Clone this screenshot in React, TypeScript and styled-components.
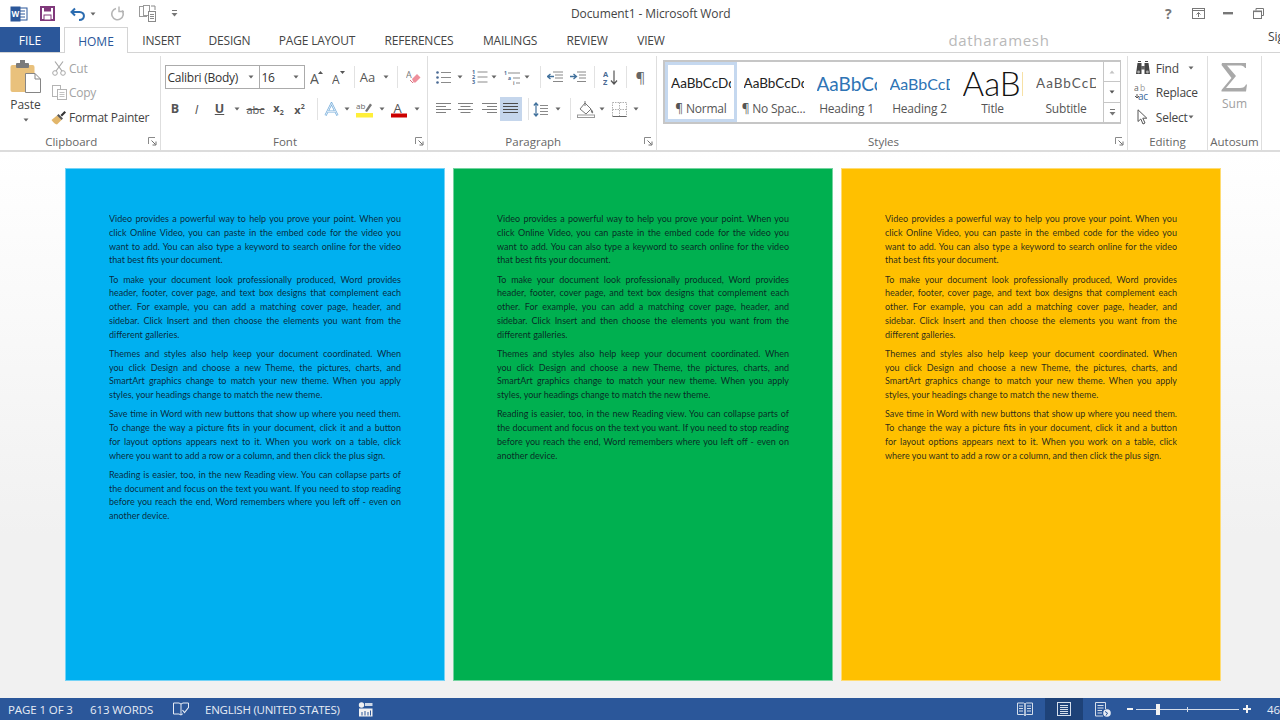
import React from 'react';
import styled, { createGlobalStyle } from 'styled-components';

const GlobalStyle = createGlobalStyle`
  html, body {
    margin: 0;
    padding: 0;
    width: 1280px;
    height: 720px;
    overflow: hidden;
    background: #fff;
    font-family: "Open Sans", "Liberation Sans", sans-serif;
  }
`;

const Window = styled.div`
  width: 1280px;
  height: 720px;
  display: flex;
  flex-direction: column;
  overflow: hidden;
  color: #444;
`;

const TitleBar = styled.div`
  height: 27px;
  flex: none;
  display: flex;
  align-items: center;
`;

const QuickAccess = styled.div`
  width: 571px;
  flex: none;
  display: flex;
  align-items: center;
  padding-left: 10px;
  box-sizing: border-box;
`;

const QuickSlot = styled.div<{ $w: number }>`
  width: ${(p) => p.$w}px;
  flex: none;
  display: flex;
  align-items: center;
`;

const DocTitle = styled.div`
  width: 159px;
  flex: none;
  font-size: 12px;
  letter-spacing: -0.1px;
  white-space: nowrap;
  color: #444;
  text-align: center;
`;

const WindowButtons = styled.div`
  margin-left: 435px;
  display: flex;
  align-items: center;
`;

const TabBar = styled.div`
  height: 25px;
  flex: none;
  display: flex;
  align-items: stretch;
  border-bottom: 1px solid #d4d4d4;
`;

const FileTab = styled.div`
  width: 60px;
  flex: none;
  background: #2b579a;
  color: #fff;
  font-size: 12px;
  padding-top: 1px;
  display: flex;
  align-items: center;
  justify-content: center;
`;

const ActiveTab = styled.div`
  width: 62px;
  margin-left: 4px;
  flex: none;
  background: #fff;
  border: 1px solid #d4d4d4;
  border-bottom: none;
  margin-bottom: -1px;
  padding-top: 1px;
  color: #2b579a;
  font-size: 12px;
  display: flex;
  align-items: center;
  justify-content: center;
`;

const Tab = styled.div<{ $w: number }>`
  width: ${(p) => p.$w}px;
  flex: none;
  font-size: 12px;
  letter-spacing: -0.2px;
  color: #444;
  padding-top: 1px;
  display: flex;
  align-items: center;
  justify-content: center;
  white-space: nowrap;
`;

const Watermark = styled.div`
  margin-left: 259px;
  width: 120px;
  flex: none;
  font-size: 15px;
  letter-spacing: 0.7px;
  color: #b9b9b9;
  display: flex;
  align-items: center;
  justify-content: center;
  padding-bottom: 20px;
  height: 25px;
  box-sizing: content-box;
`;

const SignIn = styled.div`
  margin-left: 209px;
  flex: none;
  font-size: 12px;
  color: #444;
  display: flex;
  align-items: center;
  padding-bottom: 6px;
  white-space: nowrap;
`;

const Ribbon = styled.div`
  height: 97px;
  flex: none;
  display: flex;
  border-bottom: 2px solid #dcdcdc;
`;

const Group = styled.div<{ $w: number }>`
  width: ${(p) => p.$w}px;
  flex: none;
  box-sizing: border-box;
  border-right: 1px solid #dedede;
  margin-top: 3px;
  display: flex;
  flex-direction: column;
  color: #444;
`;

const GroupBody = styled.div`
  flex: 1;
  min-height: 0;
  display: flex;
`;

const GroupFooter = styled.div<{ $plain?: boolean }>`
  height: 15px;
  padding-bottom: 1px;
  flex: none;
  display: grid;
  grid-template-columns: ${(p) => (p.$plain ? '1fr' : '0 1fr 14px')};
  align-items: center;
  font-size: 11.5px;
  color: #666;
  text-align: center;
  padding-right: ${(p) => (p.$plain ? 0 : 3)}px;
  & > svg {
    justify-self: end;
  }
`;

const ColumnRows = styled.div<{ $pad?: number }>`
  display: flex;
  flex-direction: column;
  padding-left: ${(p) => p.$pad ?? 0}px;
`;

const Row = styled.div<{ $top?: number }>`
  display: flex;
  align-items: center;
  height: 24px;
  margin-top: ${(p) => p.$top ?? 0}px;
`;

const Cell = styled.div<{ $w: number; $ml?: number; $on?: boolean }>`
  width: ${(p) => p.$w}px;
  margin-left: ${(p) => p.$ml ?? 0}px;
  height: 100%;
  flex: none;
  display: flex;
  align-items: center;
  justify-content: center;
  background: ${(p) => (p.$on ? '#c5d6ec' : 'transparent')};
`;

const Separator = styled.div<{ $ml?: number }>`
  width: 1px;
  height: 22px;
  flex: none;
  background: #e2e2e2;
  margin-left: ${(p) => p.$ml ?? 0}px;
`;

const PasteColumn = styled.div`
  width: 50px;
  flex: none;
  display: flex;
  flex-direction: column;
  align-items: center;
  padding: 4px 0 0 1px;
  box-sizing: border-box;
  font-size: 12px;
  color: #444;
`;

const BigLabel = styled.div`
  margin-top: 4px;
  line-height: 16px;
`;

const PasteCaret = styled.div`
  margin-top: 5px;
`;

const ActionRow = styled.div<{ $muted?: boolean }>`
  height: 24.5px;
  display: flex;
  align-items: center;
  gap: 1px;
  font-size: 12px;
  letter-spacing: -0.25px;
  white-space: nowrap;
  color: ${(p) => (p.$muted ? '#a3a3a3' : '#444')};
`;

const ActionIcon = styled.div`
  width: 18px;
  flex: none;
  display: flex;
  justify-content: center;
`;

const ComboBox = styled.div`
  display: flex;
  height: 24px;
  border: 1px solid #ababab;
  box-sizing: border-box;
  font-size: 12px;
  letter-spacing: -0.25px;
  color: #333;
  background: #fff;
`;

const ComboPart = styled.div<{ $w: number; $line?: boolean }>`
  width: ${(p) => p.$w}px;
  box-sizing: border-box;
  display: flex;
  align-items: center;
  justify-content: space-between;
  padding: 0 5px 0 2px;
  border-right: ${(p) => (p.$line ? '1px solid #ababab' : 'none')};
`;

const Glyph = styled.span<{ $size?: number; $weight?: number; $color?: string; $italic?: boolean; $under?: boolean }>`
  font-size: ${(p) => p.$size ?? 12}px;
  font-weight: ${(p) => p.$weight ?? 400};
  font-style: ${(p) => (p.$italic ? 'italic' : 'normal')};
  text-decoration: ${(p) => (p.$under ? 'underline' : 'none')};
  color: ${(p) => p.$color ?? '#555'};
  line-height: 1;
  white-space: nowrap;
`;

const SmallSub = styled.sub`
  font-size: 7px;
`;

const SmallSup = styled.sup`
  font-size: 7px;
`;

const Gallery = styled.div`
  margin: 4px 0 0 6px;
  width: 458px;
  height: 64px;
  box-sizing: border-box;
  border: 2px solid #c6c6c6;
  border-width: 2px 1px 2px 2px;
  display: flex;
`;

const StyleItem = styled.div<{ $w: number; $active?: boolean }>`
  width: ${(p) => p.$w}px;
  flex: none;
  box-sizing: border-box;
  border: 3px solid ${(p) => (p.$active ? '#c5d8ef' : 'transparent')};
  display: flex;
  flex-direction: column;
  align-items: center;
  overflow: hidden;
`;

const StylePreview = styled.div<{ $size: number; $color: string; $space?: number; $thin?: boolean }>`
  height: 36px;
  width: 60px;
  overflow: hidden;
  display: flex;
  align-items: center;
  justify-content: flex-start;
  font-family: Lato, "Open Sans", sans-serif;
  font-size: ${(p) => p.$size}px;
  font-weight: ${(p) => (p.$thin ? 300 : 400)};
  color: ${(p) => p.$color};
  letter-spacing: ${(p) => p.$space ?? 0}px;
  white-space: nowrap;
`;

const StyleName = styled.div`
  font-size: 12px;
  letter-spacing: -0.2px;
  color: #555;
  line-height: 16px;
  white-space: nowrap;
`;

const GalleryScroller = styled.div`
  width: 17px;
  box-sizing: border-box;
  flex: none;
  display: flex;
  flex-direction: column;
  border-left: 1px solid #c6c6c6;
`;

const ScrollButton = styled.div<{ $line?: boolean }>`
  flex: 1;
  display: flex;
  align-items: center;
  justify-content: center;
  border-bottom: ${(p) => (p.$line ? '1px solid #c6c6c6' : 'none')};
`;

const SumColumn = styled.div`
  flex: 1;
  display: flex;
  flex-direction: column;
  align-items: center;
  padding-top: 6px;
  font-size: 12px;
  color: #a0a0a0;
`;

const DocArea = styled.div`
  flex: 1;
  min-height: 0;
  background: linear-gradient(#fff 0%, #f1f1f1 70%);
  padding: 16px 0 0 65px;
  display: flex;
  gap: 8px;
`;

const PageSheet = styled.div<{ $bg: string }>`
  width: 380px;
  height: 513px;
  flex: none;
  box-sizing: border-box;
  background: ${(p) => p.$bg};
  border: 1px solid rgba(255, 255, 255, 0.45);
  padding: 43px 43px 0 43px;
  font-family: Lato, "Open Sans", sans-serif;
  font-size: 9px;
  color: rgba(10, 20, 30, 0.88);
`;

const Para = styled.div`
  margin-bottom: 5.5px;
`;

const Line = styled.div<{ $last?: boolean }>`
  height: 13.75px;
  line-height: 13.75px;
  text-align: ${(p) => (p.$last ? 'left' : 'justify')};
  text-align-last: ${(p) => (p.$last ? 'left' : 'justify')};
  white-space: ${(p) => (p.$last ? 'nowrap' : 'normal')};
  overflow: hidden;
`;

const StatusBar = styled.div`
  height: 22px;
  flex: none;
  background: #2b579a;
  color: #e6ecf5;
  font-size: 11.5px;
  letter-spacing: -0.1px;
  display: flex;
  align-items: center;
`;

const StatusText = styled.div<{ $w: number; $ml: number; $tight?: boolean }>`
  width: ${(p) => p.$w}px;
  margin-left: ${(p) => p.$ml}px;
  flex: none;
  white-space: nowrap;
  letter-spacing: ${(p) => (p.$tight ? -0.25 : -0.1)}px;
`;

const StatusSlot = styled.div<{ $w: number; $ml: number; $on?: boolean }>`
  width: ${(p) => p.$w}px;
  margin-left: ${(p) => p.$ml}px;
  height: 100%;
  flex: none;
  display: flex;
  align-items: center;
  justify-content: center;
  background: ${(p) => (p.$on ? '#1e4278' : 'transparent')};
`;

const ZoomTrack = styled.div`
  width: 103px;
  margin-left: 3px;
  height: 1px;
  flex: none;
  background: #d5deeb;
  position: relative;
`;

const ZoomThumb = styled.div`
  position: absolute;
  left: 20px;
  top: -5px;
  width: 4px;
  height: 11px;
  background: #f2f2f2;
`;

const ZoomTick = styled.div`
  position: absolute;
  left: 51px;
  top: -2px;
  width: 1px;
  height: 5px;
  background: #d5deeb;
`;

const IconSvg = styled.svg`
  display: block;
  flex: none;
`;

const Svg = ({ w, h, children }: { w: number; h: number; children: React.ReactNode }) => (
  <IconSvg width={w} height={h} viewBox={`0 0 ${w} ${h}`}>
    {children}
  </IconSvg>
);

const Caret = ({ color = '#666' }: { color?: string }) => (
  <Svg w={6} h={4}>
    <path d="M0.5 0.5 H5.5 L3 3.5 Z" fill={color} />
  </Svg>
);

const Launcher = () => (
  <Svg w={9} h={9}>
    <path d="M0.5 7 V0.5 H7" fill="none" stroke="#8a8a8a" />
    <path d="M3.5 3.5 L7.5 7.5 M8 4.5 V8 H4.5" fill="none" stroke="#6f6f6f" />
  </Svg>
);

const WordIcon = () => (
  <Svg w={18} h={16}>
    <rect x="7" y="2" width="10" height="12" fill="#fff" stroke="#2b579a" />
    <path d="M10 5 H15 M10 8 H15 M10 11 H15" stroke="#2b579a" />
    <rect x="0.5" y="0.5" width="10" height="15" fill="#2b579a" />
    <text x="1.6" y="11" fontSize="8" fontWeight="700" fill="#fff" fontFamily="Open Sans">W</text>
  </Svg>
);

const SaveIcon = () => (
  <Svg w={15} h={15}>
    <rect x="1" y="1" width="13" height="13" fill="none" stroke="#80397b" strokeWidth="2" />
    <rect x="4" y="1" width="7" height="4.5" fill="#80397b" />
    <rect x="4" y="9" width="7" height="5" fill="#fff" stroke="#80397b" />
  </Svg>
);

const UndoIcon = () => (
  <Svg w={16} h={14}>
    <path d="M5 1.5 L1.5 5 L5 8.5" fill="none" stroke="#2b6cb0" strokeWidth="2" />
    <path d="M2 5 H9.5 C15.5 5 15.5 13 9 13" fill="none" stroke="#2b6cb0" strokeWidth="2" />
  </Svg>
);

const RedoIcon = () => (
  <Svg w={15} h={15}>
    <path d="M6 2.5 A5.7 5.7 0 1 0 12 4.5" fill="none" stroke="#b5b5b5" strokeWidth="1.6" />
    <path d="M9 0.5 V5.5 H14" fill="none" stroke="#b5b5b5" strokeWidth="1.4" />
  </Svg>
);

const TouchIcon = () => (
  <Svg w={18} h={17}>
    <rect x="0.5" y="1.5" width="7" height="10" fill="none" stroke="#9a9a9a" />
    <rect x="4.5" y="0.5" width="6" height="10" fill="#fff" stroke="#9a9a9a" />
    <rect x="9.5" y="6.5" width="7" height="10" fill="#fff" stroke="#8a8a8a" />
    <path d="M11 9.5 H15 M11 11.5 H15 M11 13.5 H15" stroke="#8a8a8a" />
    <path d="M12 1 H16 V5" fill="none" stroke="#8a8a8a" />
  </Svg>
);

const CustomizeIcon = () => (
  <Svg w={7} h={7}>
    <path d="M1 0.5 H6" stroke="#777" />
    <path d="M0.5 3 H6.5 L3.5 6.5 Z" fill="#777" />
  </Svg>
);

const HelpIcon = () => <Glyph $size={14} $weight={700} $color="#777">?</Glyph>;

const PinIcon = () => (
  <Svg w={13} h={11}>
    <rect x="0.5" y="0.5" width="12" height="10" fill="none" stroke="#777" />
    <path d="M1 2.5 H12 M6.5 9 V4.5 M4.5 6.5 L6.5 4.5 L8.5 6.5" fill="none" stroke="#777" />
  </Svg>
);

const MinIcon = () => (
  <Svg w={10} h={3}>
    <rect width="10" height="2.4" fill="#777" />
  </Svg>
);

const RestoreIcon = () => (
  <Svg w={11} h={11}>
    <path d="M3 2.5 V0.5 H10.5 V7.5 H8.5" fill="none" stroke="#777" />
    <rect x="0.5" y="3" width="8" height="7.5" fill="none" stroke="#777" />
    <path d="M0.5 3.6 H8.5" stroke="#777" />
  </Svg>
);

const PasteIcon = () => (
  <Svg w={31} h={33}>
    <rect x="0.5" y="5" width="24" height="27" rx="2" fill="#e9c17c" />
    <rect x="6" y="3" width="13" height="5" rx="1" fill="#7b7b7b" />
    <rect x="10" y="0" width="5" height="4" fill="#7b7b7b" />
    <path d="M15.5 13.5 H25 L30.5 19 V32.5 H15.5 Z" fill="#fff" stroke="#858585" />
    <path d="M25 13.5 V19 H30.5" fill="none" stroke="#858585" />
  </Svg>
);

const CutIcon = () => (
  <Svg w={14} h={15}>
    <path d="M3 0.5 L10 10 M11 0.5 L4 10" stroke="#a8a8a8" strokeWidth="1.2" fill="none" />
    <circle cx="3" cy="12" r="2.3" fill="none" stroke="#a8a8a8" />
    <circle cx="11" cy="12" r="2.3" fill="none" stroke="#a8a8a8" />
  </Svg>
);

const CopyIcon = () => (
  <Svg w={15} h={15}>
    <rect x="0.5" y="0.5" width="8" height="11" fill="none" stroke="#b4b4b4" />
    <rect x="5.5" y="4.5" width="9" height="10" fill="#fff" stroke="#b4b4b4" />
    <path d="M7.5 7.5 H12.5 M7.5 9.5 H12.5 M7.5 11.5 H12.5" stroke="#c2c2c2" />
  </Svg>
);

const PainterIcon = () => (
  <Svg w={16} h={15}>
    <path d="M0.5 10 L6 5.5 L10.5 10 L6 14.5 C4 14.5 2 12 0.5 10 Z" fill="#e2b66a" />
    <path d="M6 5.5 L10.5 10 L12 8.5 L7.5 4 Z" fill="#555" />
    <path d="M9.5 5 L13.5 1 L15 2.5 L11 6.5 Z" fill="#333" />
  </Svg>
);

const GrowIcon = ({ up }: { up: boolean }) => (
  <Svg w={14} h={15}>
    <text x="0" y="14" fontSize={up ? 14 : 12} fill="#555" fontFamily="Open Sans">A</text>
    <path d={up ? 'M8 4 L10.5 1 L13 4 Z' : 'M8 1 H13 L10.5 4 Z'} fill="#555" />
  </Svg>
);

const EraserIcon = () => (
  <Svg w={15} h={15}>
    <text x="0" y="8" fontSize="9" fill="#777" fontFamily="Open Sans">A</text>
    <path d="M6 9 L11 4 L14.5 7.5 L9.5 12.5 L7.5 12.5 Z" fill="#ee8f9c" />
    <path d="M4 10 L7 13" stroke="#d9707f" />
  </Svg>
);

const TextEffectIcon = () => (
  <Svg w={15} h={15}>
    <path d="M1.5 13.5 L7.5 1.5 L13.5 13.5 M4 9.5 H11" fill="none" stroke="#7ab0dc" strokeWidth="2.2" />
    <path d="M1.5 13.5 L7.5 1.5 L13.5 13.5 M4 9.5 H11" fill="none" stroke="#fff" strokeWidth="0.7" />
  </Svg>
);

const HighlightIcon = () => (
  <Svg w={17} h={17}>
    <text x="0" y="8" fontSize="8" fill="#666" fontFamily="Open Sans">ab</text>
    <path d="M9 10 L14 2.5 L16 4 L11 11 Z" fill="#777" />
    <rect x="0" y="12" width="17" height="4.5" fill="#ffef3a" />
  </Svg>
);

const FontColorIcon = () => (
  <Svg w={16} h={17}>
    <text x="2.5" y="11.5" fontSize="13" fill="#555" fontFamily="Open Sans">A</text>
    <rect x="0" y="12.5" width="16" height="4" fill="#c00" />
  </Svg>
);

const BulletsIcon = () => (
  <Svg w={16} h={13}>
    {[1.5, 6.5, 11.5].map((y) => (
      <g key={y}>
        <circle cx="1.5" cy={y} r="1.3" fill="#4a6a94" />
        <path d={`M5 ${y} H15`} stroke="#8b8b8b" />
      </g>
    ))}
  </Svg>
);

const NumberingIcon = () => (
  <Svg w={16} h={14}>
    {[2, 7, 12].map((y, i) => (
      <g key={y}>
        <text x="0" y={y + 2} fontSize="5.5" fontWeight="700" fill="#4a6a94" fontFamily="Open Sans">{i + 1}</text>
        <path d={`M5.5 ${y} H15.5`} stroke="#8b8b8b" />
      </g>
    ))}
  </Svg>
);

const MultilevelIcon = () => (
  <Svg w={17} h={15}>
    <text x="0" y="5" fontSize="5" fontWeight="700" fill="#4a6a94" fontFamily="Open Sans">1</text>
    <text x="4" y="10" fontSize="5" fontWeight="700" fill="#4a6a94" fontFamily="Open Sans">a</text>
    <text x="9" y="15" fontSize="5" fontWeight="700" fill="#777" fontFamily="Open Sans">i</text>
    <path d="M4 3 H16 M9 8 H16 M12 13 H16" stroke="#8b8b8b" />
  </Svg>
);

const IndentIcon = ({ increase }: { increase: boolean }) => (
  <Svg w={16} h={12}>
    <path d={increase ? 'M7 1 H16 M9 4 H16 M9 7 H16 M7 10.5 H16' : 'M6 1 H16 M8 4 H16 M8 7 H16 M6 10.5 H16'} stroke="#888" />
    <path
      d={increase ? 'M0 5.5 H6 M3.5 3 L6.5 5.5 L3.5 8' : 'M7 5.5 H1 M3.5 3 L0.5 5.5 L3.5 8'}
      fill="none"
      stroke="#41719c"
      strokeWidth="1.3"
    />
  </Svg>
);

const SortIcon = () => (
  <Svg w={15} h={15}>
    <text x="0" y="7" fontSize="7.5" fontWeight="700" fill="#4a6a94" fontFamily="Open Sans">A</text>
    <text x="0" y="14.5" fontSize="7.5" fontWeight="700" fill="#4a6a94" fontFamily="Open Sans">Z</text>
    <path d="M11 0.5 V14 M8 10.5 L11 14 L14 10.5" fill="none" stroke="#555" strokeWidth="1.2" />
  </Svg>
);

const AlignIcon = ({ kind }: { kind: 'left' | 'center' | 'right' | 'full' }) => {
  const short = kind === 'full' ? 15 : 10;
  const x = kind === 'left' || kind === 'full' ? 0 : kind === 'center' ? 2.5 : 5;
  return (
    <Svg w={15} h={12}>
      {[0.5, 3.5, 6.5, 9.5].map((y, i) => (
        <path
          key={y}
          d={i % 2 === 0 ? `M0 ${y} H15` : `M${x} ${y} h${short}`}
          stroke={kind === 'full' ? '#4c4c4c' : '#808080'}
        />
      ))}
    </Svg>
  );
};

const LineSpacingIcon = () => (
  <Svg w={15} h={15}>
    <path d="M3 1 V14 M0.8 3.5 L3 1 L5.2 3.5 M0.8 11.5 L3 14 L5.2 11.5" fill="none" stroke="#41719c" strokeWidth="1.2" />
    <path d="M7 3.5 H15 M7 6.5 H15 M7 9.5 H15 M7 12.5 H15" stroke="#8b8b8b" />
  </Svg>
);

const ShadingIcon = () => (
  <Svg w={18} h={17}>
    <path d="M3 8 L8 2 L14 8 L9 13 Z" fill="#fff" stroke="#777" />
    <path d="M8 0 V5" stroke="#777" />
    <path d="M14 8 C16 10 17 11 15.5 12.5 C14 12 13.5 10 14 8 Z" fill="#777" />
    <rect x="0.5" y="14" width="17" height="2.5" fill="#fff" stroke="#999" />
  </Svg>
);

const BordersIcon = () => (
  <Svg w={15} h={15}>
    <rect x="0.5" y="0.5" width="14" height="14" fill="none" stroke="#b0b0b0" strokeDasharray="1.5 1" />
    <path d="M7.5 0.5 V14.5 M0.5 7.5 H14.5" stroke="#b0b0b0" strokeDasharray="1.5 1" />
    <path d="M0.5 14.5 H14.5" stroke="#666" />
  </Svg>
);

const FindIcon = () => (
  <Svg w={16} h={14}>
    <path d="M1 13 L2.5 2 H6.5 V13 Z M15 13 L13.5 2 H9.5 V13 Z" fill="#444" />
    <rect x="6" y="5" width="4" height="3.5" fill="#666" />
    <path d="M3 0.5 H6 M10 0.5 H13" stroke="#444" />
    <circle cx="3.6" cy="11" r="1.4" fill="#aaa" />
    <circle cx="12.4" cy="11" r="1.4" fill="#aaa" />
  </Svg>
);

const ReplaceIcon = () => (
  <Svg w={18} h={17}>
    <text x="0" y="7" fontSize="8.5" fill="#666" fontFamily="Open Sans">a</text>
    <text x="6" y="7" fontSize="8.5" fill="#999" fontFamily="Open Sans">b</text>
    <text x="4" y="16" fontSize="10" fill="#3d6a9c" fontFamily="Open Sans">ac</text>
    <path d="M3 10 V13.5 M1 12 L3 14 L5 12" fill="none" stroke="#555" />
  </Svg>
);

const SelectIcon = () => (
  <Svg w={12} h={16}>
    <path d="M1 0.8 V12.5 L3.8 10 L6 15 L8 14 L5.8 9.2 L9.8 9.2 Z" fill="#fff" stroke="#555" />
  </Svg>
);

const SigmaIcon = () => (
  <Svg w={27} h={30}>
    <path d="M1 1 H25 V6 H24 C23 4 21 3.5 18 3.5 H6 L15 14 L5 26 H19 C22 26 24 25 25 22.5 H26 L25 29.5 H0.5 V28 L10.5 16 L0.5 3 Z" fill="#a9a9a9" />
  </Svg>
);

const ReadModeIcon = () => (
  <Svg w={16} h={14}>
    <path d="M0.5 1 H6.5 L8 2 V13.5 L6.5 12.5 H0.5 Z M15.5 1 H9.5 L8 2 V13.5 L9.5 12.5 H15.5 Z" fill="none" stroke="#d5deeb" />
    <path d="M2 4 H6 M2 6.5 H6 M2 9 H6 M10 4 H14 M10 6.5 H14 M10 9 H14" stroke="#d5deeb" />
  </Svg>
);

const PrintLayoutIcon = () => (
  <Svg w={14} h={14}>
    <rect x="0.5" y="0.5" width="13" height="13" fill="none" stroke="#d5deeb" />
    <path d="M3 3.5 H11 M3 5.5 H11 M3 7.5 H11 M3 9.5 H11 M3 11.5 H11" stroke="#d5deeb" />
  </Svg>
);

const WebLayoutIcon = () => (
  <Svg w={16} h={15}>
    <path d="M0.5 0.5 H10.5 V7 M0.5 0.5 V14 H8" fill="none" stroke="#d5deeb" />
    <path d="M2.5 3.5 H8.5 M2.5 6 H8.5 M2.5 8.5 H7 M2.5 11 H7" stroke="#d5deeb" />
    <circle cx="12" cy="11" r="3.8" fill="#e8edf5" />
    <path d="M10 9.5 L12.5 11 L11 13.5" fill="none" stroke="#2b579a" />
  </Svg>
);

const BookCheckIcon = () => (
  <Svg w={16} h={15}>
    <path d="M0.5 1 H6 L8 2 V13 L6 12 H0.5 Z" fill="none" stroke="#e6ecf5" />
    <path d="M8 2 L10 1 H15.5 V6 M8 13 L9.5 12 H10" fill="none" stroke="#e6ecf5" />
    <path d="M9.5 8 L11.5 10.5 L15.5 5.5" fill="none" stroke="#e6ecf5" strokeWidth="1.2" />
  </Svg>
);

const MacroIcon = () => (
  <Svg w={15} h={15}>
    <circle cx="3.5" cy="3" r="2.7" fill="#f2f2f2" />
    <rect x="1" y="6.5" width="13.5" height="8" fill="#f2f2f2" />
    <path d="M4 13.5 V10 M7 13.5 V9 M10 13.5 V10 M12.5 13.5 V8.5" stroke="#2b579a" />
    <rect x="7" y="1" width="7.5" height="3" fill="#cfd9e8" />
  </Svg>
);

const paragraphs = {
  video: [
    'Video provides a powerful way to help you prove your point. When you',
    'click Online Video, you can paste in the embed code for the video you',
    'want to add. You can also type a keyword to search online for the video',
    'that best fits your document.',
  ],
  produced: [
    'To make your document look professionally produced, Word provides',
    'header, footer, cover page, and text box designs that complement each',
    'other. For example, you can add a matching cover page, header, and',
    'sidebar. Click Insert and then choose the elements you want from the',
    'different galleries.',
  ],
  themes: [
    'Themes and styles also help keep your document coordinated. When',
    'you click Design and choose a new Theme, the pictures, charts, and',
    'SmartArt graphics change to match your new theme. When you apply',
    'styles, your headings change to match the new theme.',
  ],
  time: [
    'Save time in Word with new buttons that show up where you need them.',
    'To change the way a picture fits in your document, click it and a button',
    'for layout options appears next to it. When you work on a table, click',
    'where you want to add a row or a column, and then click the plus sign.',
  ],
  reading: [
    'Reading is easier, too, in the new Reading view. You can collapse parts of',
    'the document and focus on the text you want. If you need to stop reading',
    'before you reach the end, Word remembers where you left off - even on',
    'another device.',
  ],
};

const pages = [
  { bg: '#00b0f0', paras: [paragraphs.video, paragraphs.produced, paragraphs.themes, paragraphs.time, paragraphs.reading] },
  { bg: '#00b050', paras: [paragraphs.video, paragraphs.produced, paragraphs.themes, paragraphs.reading] },
  { bg: '#ffc000', paras: [paragraphs.video, paragraphs.produced, paragraphs.themes, paragraphs.time] },
];

const styleItems = [
  { name: '¶ Normal', preview: 'AaBbCcDdEe', size: 13.5, color: '#222', w: 72, active: true },
  { name: '¶ No Spac...', preview: 'AaBbCcDdEe', size: 13.5, color: '#222', w: 73 },
  { name: 'Heading 1', preview: 'AaBbCcDd', size: 19, color: '#2e74b5', w: 73 },
  { name: 'Heading 2', preview: 'AaBbCcDdE', size: 16, color: '#2e74b5', w: 73 },
  { name: 'Title', preview: 'AaBbCc', size: 33, color: '#111', w: 73, thin: true },
  { name: 'Subtitle', preview: 'AaBbCcDdE', size: 13.5, color: '#5a5a5a', w: 74, space: 1 },
];

const tabs: [string, number][] = [
  ['INSERT', 67],
  ['DESIGN', 69],
  ['PAGE LAYOUT', 106],
  ['REFERENCES', 98],
  ['MAILINGS', 84],
  ['REVIEW', 70],
  ['VIEW', 58],
];

export default function App() {
  return (
    <Window>
      <GlobalStyle />
      <TitleBar>
        <QuickAccess>
          <QuickSlot $w={30}><WordIcon /></QuickSlot>
          <QuickSlot $w={30}><SaveIcon /></QuickSlot>
          <QuickSlot $w={20}><UndoIcon /></QuickSlot>
          <QuickSlot $w={20}><Caret /></QuickSlot>
          <QuickSlot $w={29}><RedoIcon /></QuickSlot>
          <QuickSlot $w={32}><TouchIcon /></QuickSlot>
          <QuickSlot $w={10}><CustomizeIcon /></QuickSlot>
        </QuickAccess>
        <DocTitle>Document1 - Microsoft Word</DocTitle>
        <WindowButtons>
          <QuickSlot $w={27}><HelpIcon /></QuickSlot>
          <QuickSlot $w={31}><PinIcon /></QuickSlot>
          <QuickSlot $w={30}><MinIcon /></QuickSlot>
          <QuickSlot $w={20}><RestoreIcon /></QuickSlot>
        </WindowButtons>
      </TitleBar>

      <TabBar>
        <FileTab>FILE</FileTab>
        <ActiveTab>HOME</ActiveTab>
        {tabs.map(([label, w]) => (
          <Tab key={label} $w={w}>{label}</Tab>
        ))}
        <Watermark>datharamesh</Watermark>
        <SignIn>Sign in</SignIn>
      </TabBar>

      <Ribbon>
        <Group $w={160.5}>
          <GroupBody>
            <PasteColumn>
              <PasteIcon />
              <BigLabel>Paste</BigLabel>
              <PasteCaret><Caret /></PasteCaret>
            </PasteColumn>
            <ColumnRows>
              <ActionRow $muted><ActionIcon><CutIcon /></ActionIcon>Cut</ActionRow>
              <ActionRow $muted><ActionIcon><CopyIcon /></ActionIcon>Copy</ActionRow>
              <ActionRow><ActionIcon><PainterIcon /></ActionIcon>Format Painter</ActionRow>
            </ColumnRows>
          </GroupBody>
          <GroupFooter><span />Clipboard<Launcher /></GroupFooter>
        </Group>

        <Group $w={267}>
          <GroupBody>
            <ColumnRows $pad={4}>
              <Row $top={9}>
                <ComboBox>
                  <ComboPart $w={94} $line>Calibri (Body)<Caret /></ComboPart>
                  <ComboPart $w={44}>16<Caret /></ComboPart>
                </ComboBox>
                <Cell $w={24}><GrowIcon up /></Cell>
                <Cell $w={20}><GrowIcon up={false} /></Cell>
                <Separator $ml={5} />
                <Cell $w={26}><Glyph $size={13}>Aa</Glyph></Cell>
                <Cell $w={10}><Caret /></Cell>
                <Separator $ml={6} />
                <Cell $w={32}><EraserIcon /></Cell>
              </Row>
              <Row $top={8}>
                <Cell $w={21}><Glyph $weight={700} $size={12.5}>B</Glyph></Cell>
                <Cell $w={22}><Glyph $italic $size={13}>I</Glyph></Cell>
                <Cell $w={24}><Glyph $weight={700} $under $size={12.5}>U</Glyph></Cell>
                <Cell $w={10}><Caret /></Cell>
                <Cell $w={28}><Glyph $size={11}><s>abc</s></Glyph></Cell>
                <Cell $w={18}><Glyph $weight={700} $size={11}>x<SmallSub>2</SmallSub></Glyph></Cell>
                <Cell $w={24}><Glyph $weight={700} $size={11}>x<SmallSup>2</SmallSup></Glyph></Cell>
                <Separator $ml={5} />
                <Cell $w={24} $ml={2}><TextEffectIcon /></Cell>
                <Cell $w={6}><Caret /></Cell>
                <Cell $w={30}><HighlightIcon /></Cell>
                <Cell $w={5}><Caret /></Cell>
                <Cell $w={29}><FontColorIcon /></Cell>
                <Cell $w={6}><Caret /></Cell>
              </Row>
            </ColumnRows>
          </GroupBody>
          <GroupFooter><span />Font<Launcher /></GroupFooter>
        </Group>

        <Group $w={229.5}>
          <GroupBody>
            <ColumnRows $pad={7}>
              <Row $top={9}>
                <Cell $w={18}><BulletsIcon /></Cell>
                <Cell $w={14}><Caret /></Cell>
                <Cell $w={20} $ml={3}><NumberingIcon /></Cell>
                <Cell $w={8}><Caret /></Cell>
                <Cell $w={18} $ml={6}><MultilevelIcon /></Cell>
                <Cell $w={10}><Caret /></Cell>
                <Separator $ml={8} />
                <Cell $w={23} $ml={3}><IndentIcon increase={false} /></Cell>
                <Cell $w={23}><IndentIcon increase /></Cell>
                <Separator $ml={4} />
                <Cell $w={31}><SortIcon /></Cell>
                <Separator />
                <Cell $w={28}><Glyph $size={15} $color="#666">¶</Glyph></Cell>
              </Row>
              <Row $top={8}>
                <Cell $w={18}><AlignIcon kind="left" /></Cell>
                <Cell $w={26}><AlignIcon kind="center" /></Cell>
                <Cell $w={21}><AlignIcon kind="right" /></Cell>
                <Cell $w={22} $on><AlignIcon kind="full" /></Cell>
                <Separator $ml={6} />
                <Cell $w={24}><LineSpacingIcon /></Cell>
                <Cell $w={10}><Caret /></Cell>
                <Separator $ml={7} />
                <Cell $w={26} $ml={2}><ShadingIcon /></Cell>
                <Cell $w={6}><Caret /></Cell>
                <Cell $w={20} $ml={5}><BordersIcon /></Cell>
                <Cell $w={8} $ml={2}><Caret /></Cell>
              </Row>
            </ColumnRows>
          </GroupBody>
          <GroupFooter><span />Paragraph<Launcher /></GroupFooter>
        </Group>

        <Group $w={471}>
          <GroupBody>
            <Gallery>
              {styleItems.map((item) => (
                <StyleItem key={item.name} $w={item.w} $active={item.active}>
                  <StylePreview $size={item.size} $color={item.color} $space={item.space} $thin={item.thin}>
                    {item.preview}
                  </StylePreview>
                  <StyleName>{item.name}</StyleName>
                </StyleItem>
              ))}
              <GalleryScroller>
                <ScrollButton $line>
                  <Svg w={6} h={4}><path d="M0.5 3.5 H5.5 L3 0.5 Z" fill="#c4c4c4" /></Svg>
                </ScrollButton>
                <ScrollButton $line><Caret color="#555" /></ScrollButton>
                <ScrollButton><CustomizeIcon /></ScrollButton>
              </GalleryScroller>
            </Gallery>
          </GroupBody>
          <GroupFooter><span />Styles<Launcher /></GroupFooter>
        </Group>

        <Group $w={80}>
          <GroupBody>
            <ColumnRows $pad={6}>
              <ActionRow><ActionIcon><FindIcon /></ActionIcon>&nbsp;Find<Cell $w={22}><Caret /></Cell></ActionRow>
              <ActionRow><ActionIcon><ReplaceIcon /></ActionIcon>&nbsp;Replace</ActionRow>
              <ActionRow><ActionIcon><SelectIcon /></ActionIcon>&nbsp;Select<Caret /></ActionRow>
            </ColumnRows>
          </GroupBody>
          <GroupFooter $plain>Editing</GroupFooter>
        </Group>

        <Group $w={54}>
          <GroupBody>
            <SumColumn>
              <SigmaIcon />
              <BigLabel>Sum</BigLabel>
            </SumColumn>
          </GroupBody>
          <GroupFooter $plain>Autosum</GroupFooter>
        </Group>
      </Ribbon>

      <DocArea>
        {pages.map((page) => (
          <PageSheet key={page.bg} $bg={page.bg}>
            {page.paras.map((lines) => (
              <Para key={lines[0]}>
                {lines.map((line, i) => (
                  <Line key={line} $last={i === lines.length - 1}>{line}</Line>
                ))}
              </Para>
            ))}
          </PageSheet>
        ))}
      </DocArea>

      <StatusBar>
        <StatusText $w={70} $ml={8}>PAGE 1 OF 3</StatusText>
        <StatusText $w={70} $ml={12}>613 WORDS</StatusText>
        <StatusSlot $w={16} $ml={13}><BookCheckIcon /></StatusSlot>
        <StatusText $w={146} $ml={16} $tight>ENGLISH (UNITED STATES)</StatusText>
        <StatusSlot $w={16} $ml={6}><MacroIcon /></StatusSlot>
        <StatusSlot $w={16} $ml={644}><ReadModeIcon /></StatusSlot>
        <StatusSlot $w={38} $ml={12} $on><PrintLayoutIcon /></StatusSlot>
        <StatusSlot $w={16} $ml={12}><WebLayoutIcon /></StatusSlot>
        <StatusSlot $w={6} $ml={16}><Svg w={6} h={2}><rect width="6" height="2" fill="#f2f2f2" /></Svg></StatusSlot>
        <ZoomTrack>
          <ZoomThumb />
          <ZoomTick />
        </ZoomTrack>
        <StatusSlot $w={8} $ml={4}><Svg w={8} h={8}><path d="M4 0 V8 M0 4 H8" stroke="#f2f2f2" strokeWidth="2" /></Svg></StatusSlot>
        <StatusText $w={30} $ml={16}>46%</StatusText>
      </StatusBar>
    </Window>
  );
}
